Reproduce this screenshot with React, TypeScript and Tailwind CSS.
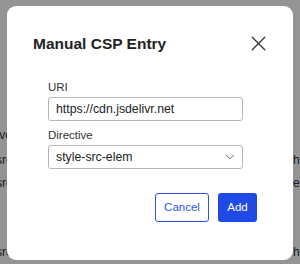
import { X, ChevronDown } from 'lucide-react';

// table rows that peek out behind the dialog
const rows = [
  { left: 'Directive', right: '', top: 'h-[26px]' },
  { left: 'script-src', right: 'https://cdn.jsdelivr', top: 'h-[23px]' },
  { left: 'style-src', right: 'error', top: 'h-[23px]' },
  { left: '', right: '', top: 'h-[23px]' },
  { left: '', right: '', top: 'h-[23px]' },
  { left: 'style-src', right: 'https://cdn.jsdelivr', top: 'h-[23px]' },
];

export default function App() {
  return (
    <div className="relative w-[300px] h-[264px] overflow-hidden bg-white" style={{ fontFamily: '"Liberation Sans", Arial, sans-serif' }}>
      <div className="flex flex-col pt-[122px] text-[12px] text-[#333]">
        {rows.map((r, i) => (
          <div key={i} className={`flex items-center ${r.top}`}>
            <div className="w-[12px] flex justify-end whitespace-nowrap">{r.left}</div>
            <div className="ml-[281px] whitespace-nowrap">{r.right}</div>
          </div>
        ))}
      </div>
      <div className="absolute inset-0 bg-black/42" />

      <div className="absolute left-[7px] top-[6px] w-[286px] h-[254px] bg-white rounded-[9px]">
        <div className="flex items-center justify-between pl-[26px] pr-[22px] pt-[25px]">
          <h2 className="text-[15.5px] font-bold text-[#222] leading-[24px]">Manual CSP Entry</h2>
          <X className="w-[25px] h-[25px] text-[#333]" strokeWidth={1.3} />
        </div>

        <div className="flex flex-col pl-[41px] pr-[50px] pt-[24px]">
          <label className="text-[11.5px] text-[#333] leading-[14px] mb-[3px]">URI</label>
          <div className="h-[24px] border border-[#b5b5b5] rounded-[3px] flex items-center px-[7px] text-[12.3px] text-[#222]">
            https://cdn.jsdelivr.net
          </div>
          <label className="text-[11.5px] text-[#333] leading-[14px] mt-[7px] mb-[3px]">Directive</label>
          <div className="h-[24px] border border-[#b5b5b5] rounded-[3px] flex items-center justify-between pl-[7px] pr-[5px] text-[12.3px] text-[#222]">
            <span>style-src-elem</span>
            <ChevronDown className="w-[14px] h-[14px] text-[#555]" strokeWidth={1.6} />
          </div>
        </div>

        <div className="flex justify-end gap-[9px] pr-[36px] pt-[24px]">
          <button className="h-[29px] w-[54px] border border-[#2a55e5] rounded-[3px] text-[11.5px] font-medium text-[#2a55e5] bg-white">Cancel</button>
          <button className="h-[29px] w-[39px] rounded-[3px] text-[11.5px] font-medium text-white bg-[#1f4ae6]">Add</button>
        </div>
      </div>
    </div>
  );
}
